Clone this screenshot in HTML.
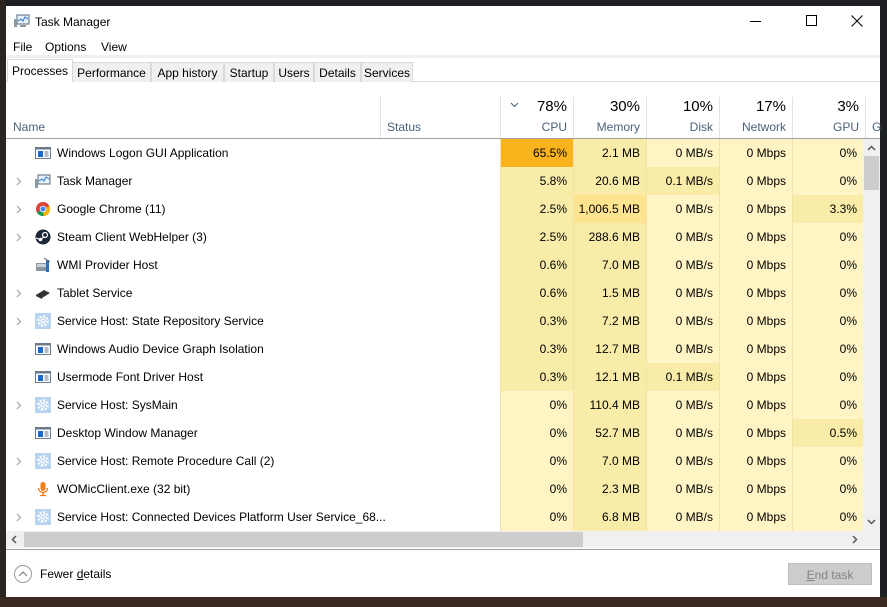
<!DOCTYPE html>
<html><head><meta charset="utf-8"><style>
*{box-sizing:border-box;margin:0;padding:0}
body{width:887px;height:607px;background:#1e1f22;position:relative;overflow:hidden;font-family:"Liberation Sans",sans-serif;font-size:12px;color:#000}
.a{position:absolute}
#win{left:6px;top:6px;width:874px;height:591px;background:#fff}
.tab{position:absolute;top:56px;height:20px;background:#f0f0f0;border:1px solid #d9d9d9;border-bottom:none;font-size:12px;padding-top:3px;text-align:center;color:#000}
.hd{position:absolute;top:91px;height:41px;border-left:1px solid #e3e3e3}
.pct{position:absolute;right:6px;top:1px;font-size:15px;color:#000}
.lab{position:absolute;right:6px;top:23px;font-size:12px;color:#4c607a}
.row{position:absolute;left:0;width:857px;height:28px}
.nm{position:absolute;left:51px;top:7px;white-space:nowrap}
.ch{position:absolute;left:10px;top:10px}
.ic{position:absolute;left:29px;top:6px;width:16px;height:16px}
.c{position:absolute;top:0;height:28px;text-align:right;padding:7px 6px 0 0;border-left:1px solid #f1e3a8}
</style></head><body>
<div class="a" style="left:0;top:0;width:6px;height:607px;background:#2a2520"></div>
<div class="a" style="left:0;top:597px;width:887px;height:10px;background:#3a2a22"></div>
<div id="win" class="a">
  <svg class="a" style="left:8px;top:8px" width="16" height="14" viewBox="0 0 16 14"><rect x="3" y="1" width="12" height="9" fill="#e8f0f8" stroke="#5a6a7a"/><polyline points="4,7 7,5 9,7 11,3 14,5" fill="none" stroke="#2a7ad0"/><rect x="0" y="5" width="3" height="8" fill="#8a9aa0"/><rect x="6" y="11" width="6" height="2" fill="#8a9aa0"/></svg>
  <div class="a" style="left:29px;top:9px;font-size:12px">Task Manager</div>
  <div class="a" style="left:744px;top:15px;width:11px;height:1px;background:#000"></div>
  <div class="a" style="left:800px;top:9px;width:11px;height:11px;border:1px solid #000"></div>
  <svg class="a" style="left:845px;top:9px" width="12" height="12"><path d="M0.5 0.5L11.5 11.5M11.5 0.5L0.5 11.5" stroke="#000"/></svg>
  <div class="a" style="left:7px;top:34px">File</div>
  <div class="a" style="left:39px;top:34px">Options</div>
  <div class="a" style="left:95px;top:34px">View</div>
  <div class="a" style="left:0;top:49px;width:874px;height:3px;background:#f0f0f0"></div>
  <div class="a" style="left:0;top:75px;width:874px;height:1px;background:#d9d9d9"></div>
  <div class="tab" style="left:66px;width:79px">Performance</div>
  <div class="tab" style="left:145px;width:73px">App history</div>
  <div class="tab" style="left:218px;width:50px">Startup</div>
  <div class="tab" style="left:268px;width:40px">Users</div>
  <div class="tab" style="left:308px;width:47px">Details</div>
  <div class="tab" style="left:355px;width:52px">Services</div>
  <div class="tab" style="left:1px;top:53px;width:66px;height:23px;background:#fff;padding-top:4px">Processes</div>
  <div class="a" style="left:7px;top:114px;color:#4c607a">Name</div>
  <div class="hd" style="left:374px;width:120px"><div class="a" style="left:6px;top:23px;color:#4c607a">Status</div></div>
  <div class="hd" style="left:494px;width:73px"><svg class="a" style="left:9px;top:5px" width="9" height="6"><path d="M1 1L4.5 4.5L8 1" stroke="#4c607a" fill="none"/></svg><div class="pct">78%</div><div class="lab">CPU</div></div>
  <div class="hd" style="left:567px;width:73px"><div class="pct">30%</div><div class="lab">Memory</div></div>
  <div class="hd" style="left:640px;width:73px"><div class="pct">10%</div><div class="lab">Disk</div></div>
  <div class="hd" style="left:713px;width:73px"><div class="pct">17%</div><div class="lab">Network</div></div>
  <div class="hd" style="left:786px;width:73px"><div class="pct">3%</div><div class="lab">GPU</div></div>
  <div class="hd" style="left:859px;width:15px"><div class="a" style="left:6px;top:23px;color:#4c607a">G</div></div>
  <div class="a" style="left:0;top:132px;width:874px;height:1px;background:#a0a0a0"></div>
  <div id="rows" class="a" style="left:0;top:133px;width:857px;height:392px;overflow:hidden"></div>
  <div class="a" style="left:857px;top:133px;width:17px;height:392px;background:#f0f0f0"></div>
  <svg class="a" style="left:861px;top:139px" width="9" height="6"><path d="M1 5L4.5 1.5L8 5" stroke="#555" stroke-width="1.5" fill="none"/></svg>
  <div class="a" style="left:858px;top:150px;width:15px;height:34px;background:#cdcdcd"></div>
  <svg class="a" style="left:861px;top:513px" width="9" height="6"><path d="M1 1L4.5 4.5L8 1" stroke="#555" stroke-width="1.5" fill="none"/></svg>
  <div class="a" style="left:0;top:525px;width:874px;height:17px;background:#f0f0f0"></div>
  <div class="a" style="left:18px;top:526px;width:559px;height:15px;background:#cdcdcd"></div>
  <svg class="a" style="left:5px;top:529px" width="6" height="9"><path d="M5 1L1.5 4.5L5 8" stroke="#555" stroke-width="1.5" fill="none"/></svg>
  <svg class="a" style="left:846px;top:529px" width="6" height="9"><path d="M1 1L4.5 4.5L1 8" stroke="#555" stroke-width="1.5" fill="none"/></svg>
  <div class="a" style="left:0;top:543px;width:874px;height:1px;background:#a0a0a0"></div>
  <div class="a" style="left:8px;top:559px;width:18px;height:18px;border:1px solid #999;border-radius:50%"></div>
  <svg class="a" style="left:12px;top:565px" width="10" height="6"><path d="M1 5L5 1L9 5" stroke="#777" fill="none"/></svg>
  <div class="a" style="left:34px;top:561px">Fewer <u>d</u>etails</div>
  <div class="a" style="left:782px;top:557px;width:84px;height:22px;background:#cccccc;border:1px solid #bfbfbf;color:#838383;text-align:center;padding-top:4px"><u>E</u>nd task</div>
</div>
<script>
var gear='<svg class="ic" viewBox="0 0 16 16"><rect width="16" height="16" fill="#b9d4ee"/><circle cx="8" cy="8" r="4.5" fill="none" stroke="#fff" stroke-width="2.5" stroke-dasharray="2 1.5"/><circle cx="8" cy="8" r="2.5" fill="#fff"/><circle cx="8" cy="8" r="1.2" fill="#b9d4ee"/></svg>';
var win='<svg class="ic" viewBox="0 0 16 16"><rect x="0.5" y="2.5" width="15" height="11" fill="#fff" stroke="#6a7a8a"/><rect x="0.5" y="2.5" width="15" height="2" fill="#6a7a8a"/><rect x="3" y="6" width="5" height="6" fill="#1a6ad0"/><path d="M9.5 7h4M9.5 9h4M9.5 11h4" stroke="#6a7a8a"/></svg>';
var tm='<svg class="ic" viewBox="0 0 16 16"><rect x="3" y="2" width="12" height="9" fill="#e8f0f8" stroke="#5a6a7a"/><polyline points="4,8 7,6 9,8 11,4 14,6" fill="none" stroke="#2a7ad0"/><rect x="0" y="6" width="3" height="9" fill="#8a9aa0"/></svg>';
var chrome='<svg class="ic" viewBox="0 0 16 16"><circle cx="8" cy="8" r="7" fill="#db4437"/><path d="M8 8L1.9 11.5A7 7 0 0 0 8.5 15Z" fill="#0f9d58"/><path d="M8 8L8.5 15A7 7 0 0 0 14.5 5Z" fill="#f4b400"/><circle cx="8" cy="8" r="3.3" fill="#fff"/><circle cx="8" cy="8" r="2.5" fill="#4285f4"/></svg>';
var steam='<svg class="ic" viewBox="0 0 16 16"><circle cx="8" cy="8" r="7.5" fill="#1b2838"/><circle cx="10" cy="6" r="2.5" fill="none" stroke="#fff" stroke-width="1.2"/><circle cx="5.5" cy="10.5" r="1.8" fill="#fff"/><path d="M1 9L6 11L9 7" stroke="#fff" fill="none"/></svg>';
var wmi='<svg class="ic" viewBox="0 0 16 16"><rect x="1" y="6" width="12" height="8" fill="#8a96a0"/><rect x="2" y="7" width="10" height="3" fill="#c6d0d8"/><rect x="11" y="3" width="3" height="12" fill="#2a72c0"/><path d="M9 1L15 5" stroke="#666"/></svg>';
var tab='<svg class="ic" viewBox="0 0 16 16"><path d="M1 10L9 5L15 8L7 13Z" fill="#333"/><path d="M1 10L7 13L7 14L1 11Z" fill="#111"/></svg>';
var mic='<svg class="ic" viewBox="0 0 16 16"><rect x="5.5" y="1" width="5" height="9" rx="2.5" fill="#f07c1a"/><path d="M3.5 7a4.5 4.5 0 0 0 9 0M8 11.5V14M5 14.5h6" stroke="#f07c1a" fill="none" stroke-width="1.3"/></svg>';
var chev='<svg class="ch" width="6" height="9"><path d="M1 1L4.5 4.5L1 8" stroke="#999" fill="none"/></svg>';
var L='#fff4c4',M='#f9eca8',D='#ffe48f',O='#fbb41e';
var rows=[
[0,win,'Windows Logon GUI Application','65.5%',O,'2.1 MB',M,'0 MB/s',L,'0%',L],
[1,tm,'Task Manager','5.8%',M,'20.6 MB',M,'0.1 MB/s',M,'0%',L],
[1,chrome,'Google Chrome (11)','2.5%',M,'1,006.5 MB',D,'0 MB/s',L,'3.3%',M],
[1,steam,'Steam Client WebHelper (3)','2.5%',M,'288.6 MB',M,'0 MB/s',L,'0%',L],
[0,wmi,'WMI Provider Host','0.6%',M,'7.0 MB',M,'0 MB/s',L,'0%',L],
[1,tab,'Tablet Service','0.6%',M,'1.5 MB',M,'0 MB/s',L,'0%',L],
[1,gear,'Service Host: State Repository Service','0.3%',M,'7.2 MB',M,'0 MB/s',L,'0%',L],
[0,win,'Windows Audio Device Graph Isolation','0.3%',M,'12.7 MB',M,'0 MB/s',L,'0%',L],
[0,win,'Usermode Font Driver Host','0.3%',M,'12.1 MB',M,'0.1 MB/s',M,'0%',L],
[1,gear,'Service Host: SysMain','0%',L,'110.4 MB',M,'0 MB/s',L,'0%',L],
[0,win,'Desktop Window Manager','0%',L,'52.7 MB',M,'0 MB/s',L,'0.5%',M],
[1,gear,'Service Host: Remote Procedure Call (2)','0%',L,'7.0 MB',M,'0 MB/s',L,'0%',L],
[0,mic,'WOMicClient.exe (32 bit)','0%',L,'2.3 MB',M,'0 MB/s',L,'0%',L],
[1,gear,'Service Host: Connected Devices Platform User Service_68...','0%',L,'6.8 MB',M,'0 MB/s',L,'0%',L]];
var h='';
rows.forEach(function(r,i){
h+='<div class="row" style="top:'+(i*28)+'px">'+(r[0]?chev:'')+r[1]+'<div class="nm">'+r[2]+'</div>'+
'<div class="c" style="left:494px;width:73px;background:'+r[4]+'">'+r[3]+'</div>'+
'<div class="c" style="left:567px;width:73px;background:'+r[6]+'">'+r[5]+'</div>'+
'<div class="c" style="left:640px;width:73px;background:'+r[8]+'">'+r[7]+'</div>'+
'<div class="c" style="left:713px;width:73px;background:'+L+'">0 Mbps</div>'+
'<div class="c" style="left:786px;width:71px;background:'+r[10]+'">'+r[9]+'</div></div>';
});
document.getElementById('rows').innerHTML=h;
</script>
</body></html>
